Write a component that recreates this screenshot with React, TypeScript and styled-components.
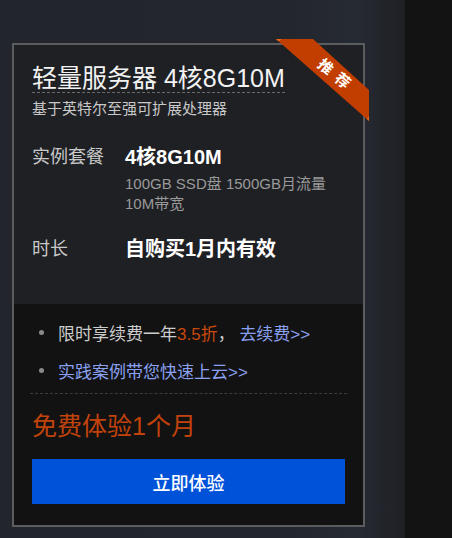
import React from 'react';
import styled, { createGlobalStyle } from 'styled-components';

const GlobalStyle = createGlobalStyle`
  html, body {
    margin: 0;
    padding: 0;
    background: #121212;
  }
  body {
    font-family: 'Liberation Sans', 'Noto Sans CJK SC', sans-serif;
  }
  * {
    box-sizing: border-box;
  }
`;

type ItemType = {
  text: string,
  highlight?: string,
  link?: string,
};

const items: ItemType[] = [
  { text: '限时享续费一年', highlight: '3.5折', link: '去续费>>' },
  { text: '', link: '实践案例带您快速上云>>' },
];

export default function App() {
  return (
    <Page>
      <GlobalStyle />
      <Stage>
        <Card>
          <Ribbon>
            <RibbonText>推荐</RibbonText>
          </Ribbon>

          <TopSection>
            <Title>轻量服务器 4核8G10M</Title>
            <Subtitle>基于英特尔至强可扩展处理器</Subtitle>

            <SpecRow>
              <Label>实例套餐</Label>
              <div>
                <Value>4核8G10M</Value>
                <Detail>100GB SSD盘 1500GB月流量<br />10M带宽</Detail>
              </div>
            </SpecRow>

            <SpecRow spaced>
              <Label>时长</Label>
              <Value>自购买1月内有效</Value>
            </SpecRow>
          </TopSection>

          <BottomSection>
            <PerkList>
              {items.map((item, i) => (
                <Perk key={i}>
                  <Dot />
                  <span>
                    {item.text}
                    {item.highlight && <Highlight>{item.highlight}</Highlight>}
                    {item.highlight && '， '}
                    {item.link && <PerkLink>{item.link}</PerkLink>}
                  </span>
                </Perk>
              ))}
            </PerkList>

            <Offer>免费体验1个月</Offer>
            <TryButton>立即体验</TryButton>
          </BottomSection>
        </Card>
      </Stage>
      <SideStrip />
    </Page>
  );
}

const Page = styled.div`
  display: flex;
  width: 452px;
  height: 538px;
  overflow: hidden;
`;

const Stage = styled.div`
  width: 405px;
  height: 100%;
  padding: 43px 0 0 12px;
  background: linear-gradient(90deg, #22252b 0%, #23262d 70%, #262a33 88%, #1f2024 100%);
`;

const SideStrip = styled.div`
  flex: 1;
  background: #131313;
`;

const Card = styled.div`
  position: relative;
  width: 353px;
  border: 2px solid #5b5c5e;
  background: #121212;
`;

const Ribbon = styled.div`
  position: absolute;
  top: -6px;
  right: -6px;
  width: 93px;
  height: 82px;
  background: #c23d00;
  clip-path: polygon(0 0, 37px 0, 93px 51px, 93px 82px);
  z-index: 2;

  &::before {
    content: '';
    position: absolute;
    top: 0;
    left: 0;
    border-top: 4px solid #e8661a;
    border-right: 6px solid transparent;
    width: 0;
    height: 0;
  }

  &::after {
    content: '';
    position: absolute;
    right: 0;
    bottom: 0;
    border-bottom: 5px solid #e8661a;
    border-left: 4px solid transparent;
    width: 0;
    height: 0;
  }
`;

const RibbonText = styled.div`
  position: absolute;
  left: 30px;
  top: 26px;
  width: 56px;
  text-align: center;
  color: #ffffff;
  font-size: 15px;
  font-weight: 700;
  letter-spacing: 7px;
  text-indent: 7px;
  line-height: 18px;
  transform: rotate(40deg);
`;

const TopSection = styled.div`
  background: #1f2024;
  padding: 19px 18px 42px;
`;

const Title = styled.div`
  display: inline-block;
  font-size: 25px;
  line-height: 28px;
  color: #f2f2f2;
  border-bottom: 1px dashed #6a6a6a;
`;

const Subtitle = styled.div`
  margin-top: 6px;
  font-size: 15px;
  line-height: 20px;
  color: #c8c8c8;
`;

const SpecRow = styled.div<{ spaced?: boolean }>`
  display: flex;
  margin-top: ${(props) => props.spaced ? '22px' : '25px'};
`;

const Label = styled.div`
  width: 93px;
  flex-shrink: 0;
  font-size: 18px;
  line-height: 26px;
  color: #c8c8c8;
`;

const Value = styled.div`
  font-size: 20px;
  line-height: 26px;
  font-weight: 700;
  color: #ffffff;
`;

const Detail = styled.div`
  margin-top: 4px;
  font-size: 15px;
  line-height: 20px;
  color: #9a9a9a;
`;

const BottomSection = styled.div`
  background: #121212;
  padding: 9px 18px 21px;
`;

const PerkList = styled.div`
  margin: 0 -2px;
  padding: 0 2px 4px;
  border-bottom: 1px dashed #3c3c3c;
`;

const Perk = styled.div`
  display: flex;
  align-items: center;
  height: 38px;
  font-size: 17px;
  color: #cccccc;
`;

const Dot = styled.span`
  width: 5px;
  height: 5px;
  border-radius: 50%;
  background: #8a8a8a;
  margin: 0 14px 0 7px;
  flex-shrink: 0;
`;

const Highlight = styled.span`
  color: #c8480c;
`;

const PerkLink = styled.span`
  color: #8aa0f0;
  cursor: pointer;
`;

const Offer = styled.div`
  margin-top: 15px;
  font-size: 25px;
  line-height: 34px;
  color: #c2420c;
`;

const TryButton = styled.div`
  margin-top: 16px;
  height: 45px;
  display: flex;
  align-items: center;
  justify-content: center;
  background: #0052d9;
  color: #ffffff;
  font-size: 18px;
  font-weight: 500;
  cursor: pointer;
`;
